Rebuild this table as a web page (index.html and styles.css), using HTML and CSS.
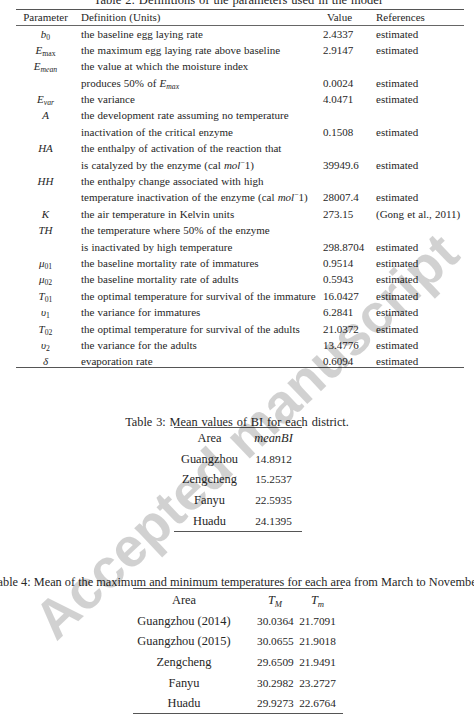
FILE: index.html
```html
<!DOCTYPE html>
<html>
<head>
<meta charset="utf-8">
<link rel="stylesheet" href="styles.css">
</head>
<body>
<div class="page">
  <div class="content">
    <div class="title">Table 2: Definitions of the parameters used in the model</div>
    <div class="t2">
      <div class="row head"><span class="c1">Parameter</span><span class="c2">Definition (Units)</span><span class="c3 hv">Value</span><span class="c4">References</span></div>
      <div class="row"><span class="c1"><i>b</i><sub>0</sub></span><span class="c2">the baseline egg laying rate</span><span class="c3">2.4337</span><span class="c4">estimated</span></div>
      <div class="row"><span class="c1"><i>E</i><sub>max</sub></span><span class="c2">the maximum egg laying rate above baseline</span><span class="c3">2.9147</span><span class="c4">estimated</span></div>
      <div class="row"><span class="c1"><i>E</i><sub><i>mean</i></sub></span><span class="c2">the value at which the moisture index</span><span class="c3"></span><span class="c4"></span></div>
      <div class="row"><span class="c1"></span><span class="c2">produces 50% of <i>E</i><sub><i>max</i></sub></span><span class="c3">0.0024</span><span class="c4">estimated</span></div>
      <div class="row"><span class="c1"><i>E</i><sub><i>var</i></sub></span><span class="c2">the variance</span><span class="c3">4.0471</span><span class="c4">estimated</span></div>
      <div class="row"><span class="c1"><i>A</i></span><span class="c2">the development rate assuming no temperature</span><span class="c3"></span><span class="c4"></span></div>
      <div class="row"><span class="c1"></span><span class="c2">inactivation of the critical enzyme</span><span class="c3">0.1508</span><span class="c4">estimated</span></div>
      <div class="row"><span class="c1"><i>HA</i></span><span class="c2">the enthalpy of activation of the reaction that</span><span class="c3"></span><span class="c4"></span></div>
      <div class="row"><span class="c1"></span><span class="c2">is catalyzed by the enzyme (cal <i>mol</i><sup>−</sup>1)</span><span class="c3">39949.6</span><span class="c4">estimated</span></div>
      <div class="row"><span class="c1"><i>HH</i></span><span class="c2">the enthalpy change associated with high</span><span class="c3"></span><span class="c4"></span></div>
      <div class="row"><span class="c1"></span><span class="c2">temperature inactivation of the enzyme (cal <i>mol</i><sup>−</sup>1)</span><span class="c3">28007.4</span><span class="c4">estimated</span></div>
      <div class="row"><span class="c1"><i>K</i></span><span class="c2">the air temperature in Kelvin units</span><span class="c3">273.15</span><span class="c4">(Gong et al., 2011)</span></div>
      <div class="row"><span class="c1"><i>TH</i></span><span class="c2">the temperature where 50% of the enzyme</span><span class="c3"></span><span class="c4"></span></div>
      <div class="row"><span class="c1"></span><span class="c2">is inactivated by high temperature</span><span class="c3">298.8704</span><span class="c4">estimated</span></div>
      <div class="row"><span class="c1"><i>μ</i><sub>01</sub></span><span class="c2">the baseline mortality rate of immatures</span><span class="c3">0.9514</span><span class="c4">estimated</span></div>
      <div class="row"><span class="c1"><i>μ</i><sub>02</sub></span><span class="c2">the baseline mortality rate of adults</span><span class="c3">0.5943</span><span class="c4">estimated</span></div>
      <div class="row"><span class="c1"><i>T</i><sub>01</sub></span><span class="c2">the optimal temperature for survival of the immature</span><span class="c3">16.0427</span><span class="c4">estimated</span></div>
      <div class="row"><span class="c1"><i>υ</i><sub>1</sub></span><span class="c2">the variance for immatures</span><span class="c3">6.2841</span><span class="c4">estimated</span></div>
      <div class="row"><span class="c1"><i>T</i><sub>02</sub></span><span class="c2">the optimal temperature for survival of the adults</span><span class="c3">21.0372</span><span class="c4">estimated</span></div>
      <div class="row"><span class="c1"><i>υ</i><sub>2</sub></span><span class="c2">the variance for the adults</span><span class="c3">13.4776</span><span class="c4">estimated</span></div>
      <div class="row last"><span class="c1"><i>δ</i></span><span class="c2">evaporation rate</span><span class="c3">0.6094</span><span class="c4">estimated</span></div>
    </div>

    <div class="cap cap3"><span>Table 3: Mean values of BI for each district.</span></div>
    <div class="t3">
      <div class="row3"><span class="a">Area</span><span class="b"><i>meanBI</i></span></div>
      <div class="row3"><span class="a">Guangzhou</span><span class="b num">14.8912</span></div>
      <div class="row3"><span class="a">Zengcheng</span><span class="b num">15.2537</span></div>
      <div class="row3"><span class="a">Fanyu</span><span class="b num">22.5935</span></div>
      <div class="row3"><span class="a">Huadu</span><span class="b num">24.1395</span></div>
    </div>

    <div class="cap cap4"><span>Table 4: Mean of the maximum and minimum temperatures for each area from March to November.</span></div>
    <div class="t4">
      <div class="row4"><span class="a">Area</span><span class="b"><i>T</i><sub><i>M</i></sub></span><span class="c"><i>T</i><sub><i>m</i></sub></span></div>
      <div class="row4"><span class="a">Guangzhou (2014)</span><span class="b num">30.0364</span><span class="c num">21.7091</span></div>
      <div class="row4"><span class="a">Guangzhou (2015)</span><span class="b num">30.0655</span><span class="c num">21.9018</span></div>
      <div class="row4"><span class="a">Zengcheng</span><span class="b num">29.6509</span><span class="c num">21.9491</span></div>
      <div class="row4"><span class="a">Fanyu</span><span class="b num">30.2982</span><span class="c num">23.2727</span></div>
      <div class="row4 last4"><span class="a">Huadu</span><span class="b num">29.9273</span><span class="c num">22.6764</span></div>
    </div>
  </div>
  <div class="watermark">Accepted manuscript</div>
</div>
</body>
</html>
```

FILE: styles.css
```css
html, body {
  margin: 0;
  padding: 0;
  background: #ffffff;
}

.page {
  position: relative;
  width: 474px;
  height: 716px;
  overflow: hidden;
  font-family: "Liberation Serif", "Times New Roman", serif;
  color: #262626;
}

.content {
  display: flex;
  flex-direction: column;
}

sub {
  font-size: 70%;
  line-height: 0;
  vertical-align: -0.3em;
}

sup {
  font-size: 70%;
  line-height: 0;
  vertical-align: 0.5em;
}

.title {
  margin-top: -7px;
  height: 14px;
  line-height: 14px;
  font-size: 12.5px;
  word-spacing: 0.8px;
  text-align: center;
  white-space: nowrap;
  padding-left: 2px;
}

.t2 {
  margin: 2px 0 0 16px;
  width: 448px;
  border-top: 1.5px solid #555;
  border-bottom: 1.5px solid #555;
  font-size: 11px;
  word-spacing: 0.4px;
}

.row {
  display: grid;
  grid-template-columns: 59px 242px 53px 94px;
  height: 16.4px;
  line-height: 16.4px;
  white-space: nowrap;
}

.row.head {
  height: 14.5px;
  line-height: 14.5px;
  border-bottom: 1px solid #666;
}

.row.last {
  height: 14px;
  line-height: 17px;
}

.c1 {
  text-align: center;
}

.c2, .c3, .c4 {
  padding-left: 6px;
}

.c3.hv {
  padding-left: 10px;
}

.cap {
  display: flex;
  justify-content: center;
  white-space: nowrap;
  font-size: 12.3px;
  line-height: 16px;
}

.cap3 {
  margin-top: 45.5px;
  height: 13px;
  word-spacing: 0.8px;
}

.t3 {
  align-self: center;
  margin-left: 2px;
  width: 128px;
  border-top: 1.2px solid #555;
  border-bottom: 1.2px solid #555;
  font-size: 12.4px;
}

.row3 {
  display: grid;
  grid-template-columns: 71px 57px;
  height: 20.7px;
  line-height: 20.7px;
  text-align: center;
  white-space: nowrap;
}

.num {
  font-size: 11.3px;
}

.cap4 {
  margin-top: 42px;
  height: 14px;
}

.t4 {
  align-self: center;
  margin-left: 2px;
  width: 210px;
  border-top: 1.2px solid #555;
  border-bottom: 1.2px solid #555;
  font-size: 12.4px;
  padding-top: 0.8px;
}

.row4 {
  display: grid;
  grid-template-columns: 102px 61px 47px;
  height: 20.7px;
  line-height: 20.7px;
  text-align: center;
  white-space: nowrap;
}

.row4.last4 {
  height: 19.5px;
}

.row4 .b {
  padding: 0 3px 0 22px;
}

.row4 .c {
  padding: 0 7px 0 3px;
}

.watermark {
  position: absolute;
  left: 246px;
  top: 436px;
  transform: translate(-50%, -50%) rotate(-43.5deg);
  font-family: "Liberation Sans", Arial, sans-serif;
  font-weight: bold;
  font-size: 55px;
  white-space: nowrap;
  color: rgba(0, 0, 0, 0.18);
  pointer-events: none;
}
```
